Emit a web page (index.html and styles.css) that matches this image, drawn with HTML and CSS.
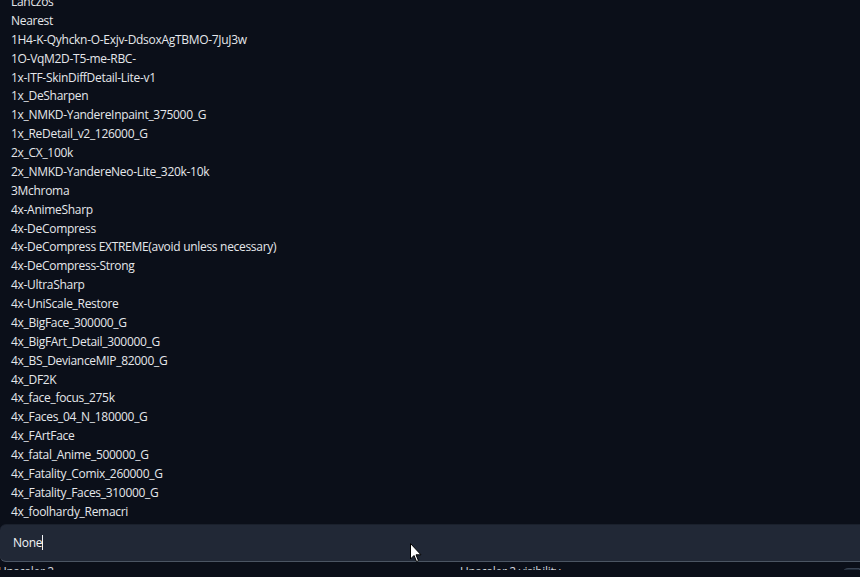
FILE: index.html
```html
<!DOCTYPE html>
<html>
<head>
<meta charset="utf-8">
<link rel="stylesheet" href="styles.css">
</head>
<body>
<div class="page">
  <ul class="options">
    <li>Lanczos</li>
    <li>Nearest</li>
    <li>1H4-K-Qyhckn-O-Exjv-DdsoxAgTBMO-7JuJ3w</li>
    <li>1O-VqM2D-T5-me-RBC-</li>
    <li>1x-ITF-SkinDiffDetail-Lite-v1</li>
    <li>1x_DeSharpen</li>
    <li>1x_NMKD-YandereInpaint_375000_G</li>
    <li>1x_ReDetail_v2_126000_G</li>
    <li>2x_CX_100k</li>
    <li>2x_NMKD-YandereNeo-Lite_320k-10k</li>
    <li>3Mchroma</li>
    <li>4x-AnimeSharp</li>
    <li>4x-DeCompress</li>
    <li>4x-DeCompress EXTREME(avoid unless necessary)</li>
    <li>4x-DeCompress-Strong</li>
    <li>4x-UltraSharp</li>
    <li>4x-UniScale_Restore</li>
    <li>4x_BigFace_300000_G</li>
    <li>4x_BigFArt_Detail_300000_G</li>
    <li>4x_BS_DevianceMIP_82000_G</li>
    <li>4x_DF2K</li>
    <li>4x_face_focus_275k</li>
    <li>4x_Faces_04_N_180000_G</li>
    <li>4x_FArtFace</li>
    <li>4x_fatal_Anime_500000_G</li>
    <li>4x_Fatality_Comix_260000_G</li>
    <li>4x_Fatality_Faces_310000_G</li>
    <li>4x_foolhardy_Remacri</li>
  </ul>
  <div class="input"><span class="value">None</span><span class="caret"></span></div>
  <div class="labels">
    <div class="label first">Upscaler 2</div>
    <div class="label second">Upscaler 2 visibility</div>
    <div class="numbox"></div>
  </div>
  <svg class="pointer" width="13" height="20" viewBox="0 0 13 20"><path d="M0.5 0.5 L0.5 16 L4 12.5 L6.5 18.5 L8.5 17.7 L6 11.8 L11 11.8 Z" fill="#fff" stroke="#000" stroke-width="1"/></svg>
</div>
</body>
</html>
```
FILE: styles.css
```css
html, body {
  margin: 0;
  padding: 0;
  background: #0b0f19;
  overflow: hidden;
}
.page {
  position: relative;
  width: 860px;
  height: 577px;
  font-family: "Open Sans", "Noto Sans", sans-serif;
  font-size: 12px;
  letter-spacing: -0.3px;
  color: #e5e7eb;
}
.options {
  list-style: none;
  margin: -7px 0 0 0;
  padding: 0;
}
.options li {
  height: 18.88px;
  line-height: 18.88px;
  padding-left: 11px;
  white-space: nowrap;
}
.input {
  margin-top: 2px;
  height: 36px;
  background: #212836;
  border-top: 1px solid #1a202c;
  border-bottom: 1px solid #4b5563;
  border-radius: 6px 0 0 6px;
  display: flex;
  align-items: center;
  padding-left: 13px;
  color: #f3f4f6;
}
.caret {
  width: 1px;
  height: 15px;
  background: #f3f4f6;
}
.labels {
  display: flex;
  margin-top: 4px;
  height: 20px;
}
.label {
  line-height: 12px;
  color: #d1d5db;
  white-space: nowrap;
}
.first {
  width: 462px;
  margin-left: -2px;
}
.second {
  width: 382px;
}
.numbox {
  flex: 1;
  margin-top: 2px;
  background: #1f2937;
  border: 1px solid #374151;
  border-radius: 6px 0 0 0;
}
.pointer {
  position: absolute;
  left: 410px;
  top: 550px;
}
```
